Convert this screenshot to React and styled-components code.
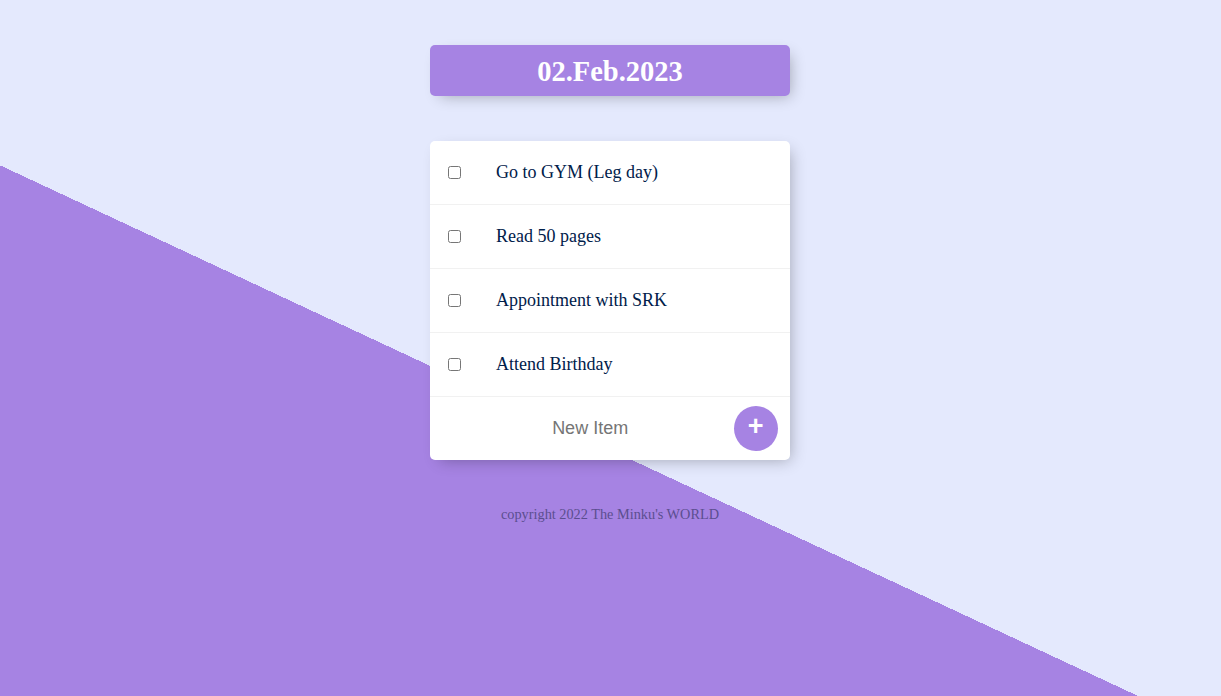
import React from "react";
import styled, { createGlobalStyle } from "styled-components";

const GlobalStyle = createGlobalStyle`
  html {
    min-height: 100%;
    background-color: #E4E9FD;
    background-image: linear-gradient(25deg, #A683E3 50%, #E4E9FD 50%);
    background-repeat: no-repeat;
    background-size: 100% 900px;
  }
  body {
    margin: 0;
    font-family: "Liberation Serif", "Times New Roman", serif;
    overflow: hidden;
  }
`;

const Page = styled.div`
  display: flex;
  flex-direction: column;
  align-items: center;
  padding: 45px 1px 0 0;
`;

const Box = styled.div`
  width: 360px;
  background: ${(p) => (p.$accent ? "#A683E3" : "#fff")};
  border-radius: 5px;
  box-shadow: 5px 5px 15px -5px rgba(0, 0, 0, 0.3);
  margin-bottom: 45px;
  overflow: hidden;
`;

const Heading = styled.h1`
  margin: 0;
  height: 51px;
  display: flex;
  align-items: center;
  justify-content: center;
  color: #fff;
  font-size: 28.5px;
  font-weight: 700;
  padding-top: 2px;
  box-sizing: border-box;
`;

const Item = styled.div`
  display: flex;
  align-items: center;
  height: 63px;
  border-bottom: 1px solid #f1f1f1;
`;

const Check = styled.input`
  width: 13px;
  height: 13px;
  margin: 0 0 0 18px;
`;

const Label = styled.p`
  margin: 0 0 0 35px;
  font-size: 18px;
  color: #00204a;
`;

const Form = styled.form`
  display: flex;
  align-items: center;
  height: 63px;
`;

const TextInput = styled.input`
  box-sizing: content-box;
  width: 297px;
  padding: 0 0 0 16px;
  height: 40px;
  border: none;
  outline: none;
  text-align: center;
  font-family: "Liberation Sans", Arial, sans-serif;
  font-size: 18px;
  color: #333;
  background: transparent;
  &::placeholder {
    color: #757575;
  }
`;

const AddButton = styled.button`
  margin-left: auto;
  margin-right: 12px;
  width: 45px;
  height: 45px;
  border-radius: 50%;
  border: none;
  background: #A683E3;
  color: #fff;
  font-family: "Liberation Sans", Arial, sans-serif;
  font-size: 27px;
  font-weight: 700;
  line-height: 1;
  padding: 0 1px 4px 0;
  display: flex;
  align-items: center;
  justify-content: center;
`;

const Footer = styled.footer`
  font-size: 14.3px;
  color: #5b4e8f;
  text-align: center;
  margin-top: 1px;
`;

const items = [
  "Go to GYM (Leg day)",
  "Read 50 pages",
  "Appointment with SRK",
  "Attend Birthday",
];

export default function App() {
  return (
    <>
      <GlobalStyle />
      <Page>
        <Box $accent>
          <Heading>02.Feb.2023</Heading>
        </Box>
        <Box>
          {items.map((t) => (
            <Item key={t}>
              <Check type="checkbox" />
              <Label>{t}</Label>
            </Item>
          ))}
          <Form onSubmit={(e) => e.preventDefault()}>
            <TextInput type="text" placeholder="New Item" />
            <AddButton type="submit">+</AddButton>
          </Form>
        </Box>
        <Footer>copyright 2022 The Minku's WORLD</Footer>
      </Page>
    </>
  );
}
